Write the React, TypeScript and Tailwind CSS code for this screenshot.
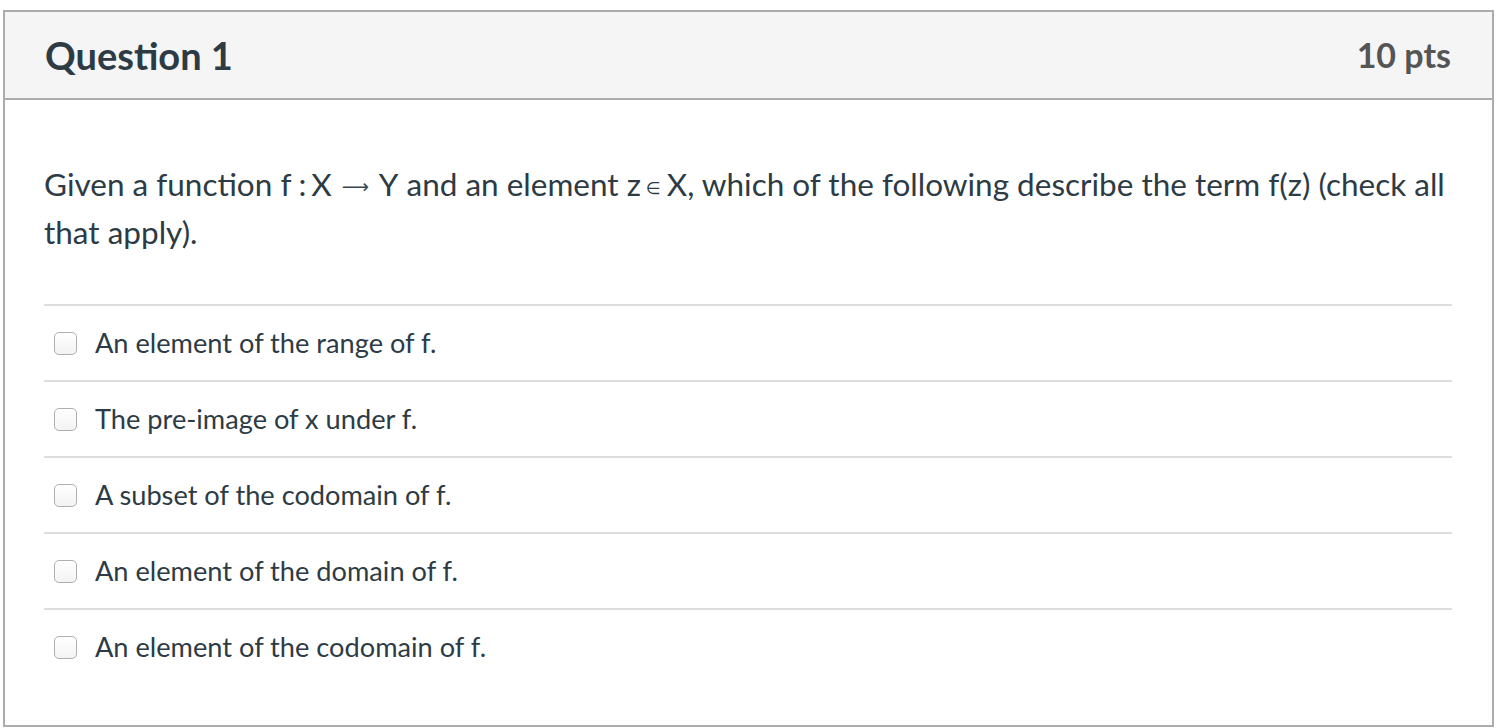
import React from 'react';

const answers = [
  'An element of the range of f.',
  'The pre-image of x under f.',
  'A subset of the codomain of f.',
  'An element of the domain of f.',
  'An element of the codomain of f.',
];

const Checkbox = () => (
  <span className="w-[23px] h-[23px] shrink-0 rounded-[5px] border border-[#b0b0b0] bg-gradient-to-b from-white to-[#f3f3f3]" />
);

export default function App() {
  return (
    <div className="min-h-screen bg-white pt-[10px] pl-[3px] font-['Lato','Noto_Sans',sans-serif] text-[#2d3b45]">
      <div className="w-[1491px] border-2 border-[#acacac]">
        <div className="h-[88px] bg-[#f5f5f5] border-b-2 border-[#acacac] flex items-center justify-between pl-[40px] pr-[41px]">
          <h2 className="text-[38px] font-bold leading-none">Question 1</h2>
          <span className="text-[34px] font-bold text-[#555555] leading-none">10 pts</span>
        </div>
        <div className="pl-[39px] pr-[40px] pt-[60px] pb-[41px]">
          <p className="text-[31.5px] leading-[48px] mb-[48px]">
            Given a function <span className="inline-block">f<span className="ml-[7px] mr-[5px]">:</span>X<span className="inline-block w-[31px] mx-[8px] text-center font-['DejaVu_Sans',sans-serif] text-[19px] leading-none align-[3px] text-[#3a4750]">⟶</span>Y</span> and an element <span className="inline-block">z<span className="inline-block ml-[5px] mr-[6px] font-['DejaVu_Sans',sans-serif] text-[17px] leading-none align-[2px]">∈</span>X,</span> which of the following describe the term f(z) (check all that apply).
          </p>
          <ul>
            {answers.map((a) => (
              <li key={a} className="border-t-2 border-[#dddddd] h-[76px] flex items-center gap-[18px] pl-[10px]">
                <Checkbox />
                <span className="text-[27.2px] leading-none">{a}</span>
              </li>
            ))}
          </ul>
        </div>
      </div>
    </div>
  );
}
